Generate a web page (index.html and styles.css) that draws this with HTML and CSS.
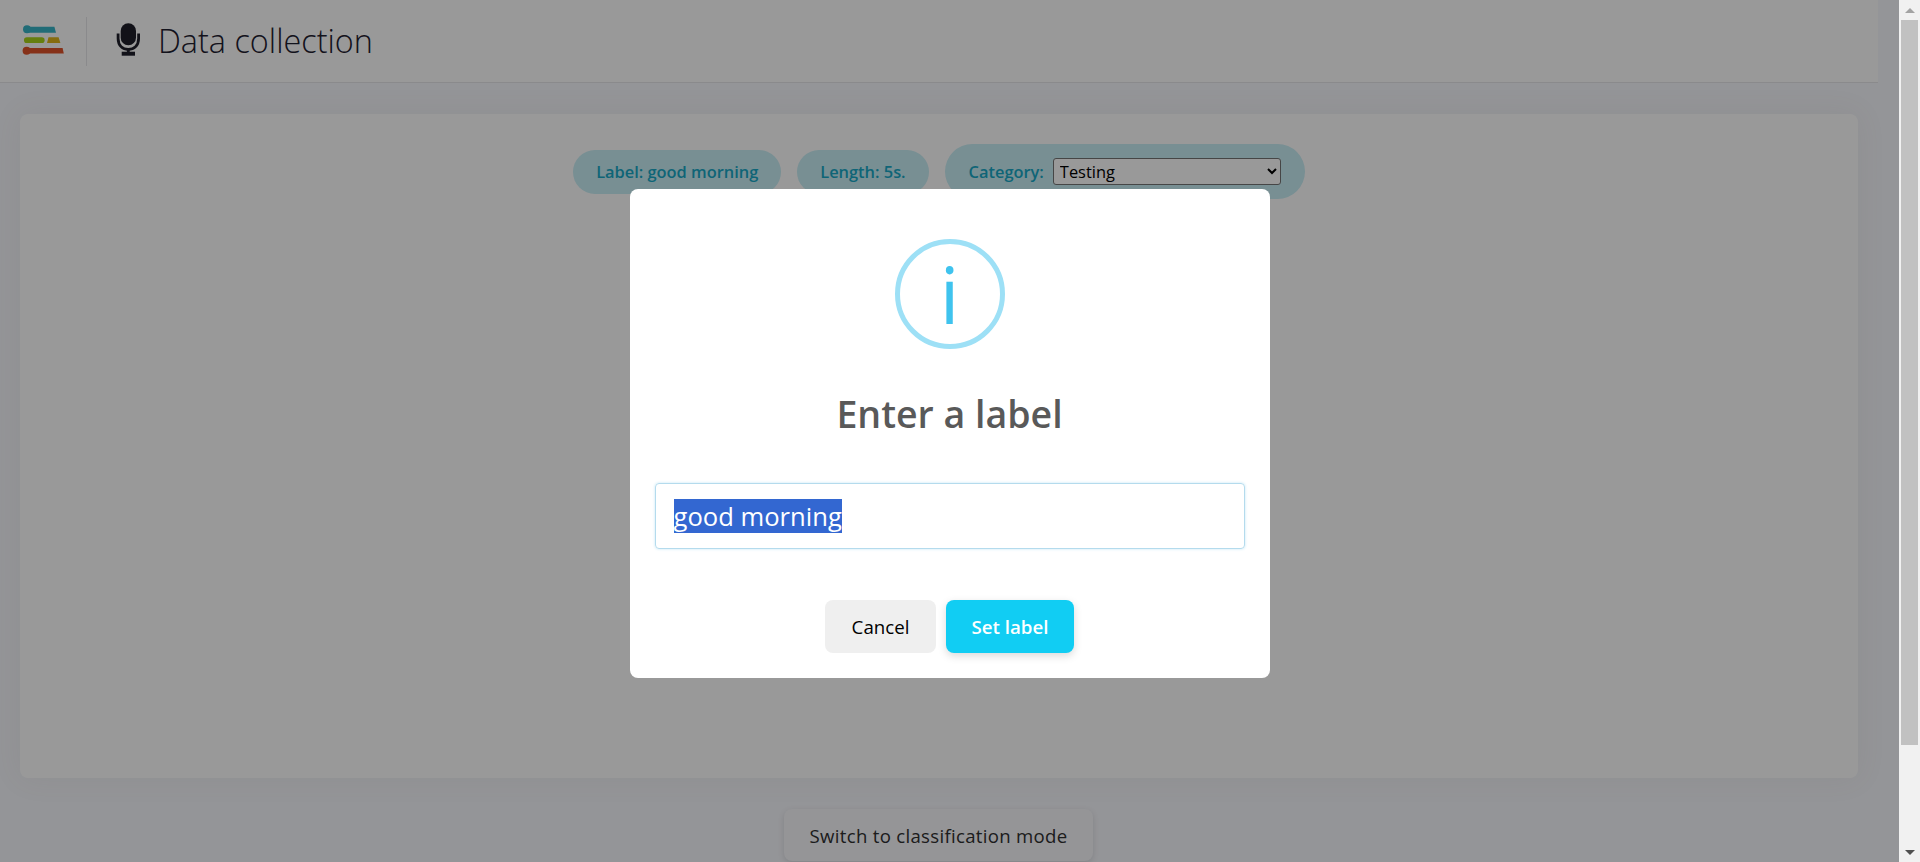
FILE: index.html
```html
<!DOCTYPE html>
<html lang="en">
<head>
<meta charset="utf-8">
<title>Data collection</title>
<link rel="stylesheet" href="styles.css">
</head>
<body>
<div class="viewport">
  <div class="page">
    <div class="page-inner">
      <header class="topbar">
        <svg class="logo" viewBox="0 0 44 32" width="44" height="32" aria-hidden="true">
          <circle class="l-teal" cx="5" cy="5.3" r="4"/>
          <path class="l-teal" d="M5 2.7H32.4L34 8.7H5Z"/>
          <rect class="l-green" x="2" y="13.3" width="20.6" height="5.7" rx="2.85"/>
          <path class="l-orange" d="M26.5 13.3H36.6L38.4 19H25Z"/>
          <circle class="l-red" cx="4.6" cy="26.7" r="4"/>
          <path class="l-red" d="M4.6 24H40.6L41.8 29.4H4.6Z"/>
        </svg>
        <div class="divider"></div>
        <svg class="mic" viewBox="0 0 24 34" width="24" height="34" aria-hidden="true">
          <rect class="mic-fill" x="4.7" y="0.3" width="15.3" height="22" rx="7.6"/>
          <path class="mic-line" d="M2.1 10.5V15.5C2.1 22.5 6.5 26.5 12.3 26.5S22.6 22.5 22.6 15.5V10.5"/>
          <path class="mic-line" d="M12.3 26.5V30"/>
          <path class="mic-base" d="M5.7 30.7H19"/>
        </svg>
        <h1 class="title">Data collection</h1>
      </header>
      <main class="card">
        <div class="pills">
          <div class="pill">Label: good morning</div>
          <div class="pill">Length: 5s.</div>
          <div class="pill pill-large">
            <span class="cat-label">Category:</span>
            <select class="cat-select"><option>Testing</option><option>Training</option></select>
          </div>
        </div>
      </main>
      <div class="switch-row"><button class="switch-btn">Switch to classification mode</button></div>
    </div>
    <div class="overlay">
      <div class="modal">
        <div class="info-icon"><span class="info-i">i</span></div>
        <h2 class="modal-title">Enter a label</h2>
        <div class="modal-input"><span class="selected">good morning</span></div>
        <div class="modal-actions">
          <button class="btn btn-cancel">Cancel</button>
          <button class="btn btn-confirm">Set label</button>
        </div>
      </div>
    </div>
  </div>
  <div class="scrollbar">
    <div class="arrow arrow-up"></div>
    <div class="track"><div class="thumb"></div></div>
    <div class="arrow arrow-down"></div>
  </div>
</div>
</body>
</html>
```
FILE: styles.css
```css
* { box-sizing: border-box; }
html, body { margin: 0; height: 100%; overflow: hidden; }
body { font-family: "Open Sans", sans-serif; background: #f7f8ff; }

.viewport { display: flex; height: 862px; width: 1920px; }
.page { position: relative; flex: 0 0 1899px; height: 862px; overflow: hidden; background: #f7f8fd; }
.page-inner { width: 1878px; }

.topbar {
  height: 83px; background: #fff; border-bottom: 1px solid #e6e6ea;
  display: flex; align-items: center; padding-left: 22px;
}
.logo { flex: none; margin-top: -2px; }
.l-teal { fill: #38b4c6; }
.l-green { fill: #a8d21a; }
.l-orange { fill: #e0b518; }
.l-red { fill: #e0532a; }
.divider { width: 1px; height: 49px; background: #e6e6ea; margin: 0 29px 0 20px; flex: none; }
.mic { flex: none; margin-right: 18px; margin-top: -2px; }
.mic-fill { fill: #1e1f2b; }
.mic-line { fill: none; stroke: #1e1f2b; stroke-width: 2.8; }
.mic-base { fill: none; stroke: #1e1f2b; stroke-width: 4; }
.title { margin: 0; font-size: 32.4px; font-weight: 300; color: #1e2030; line-height: 1; margin-top: -2px; }

.card {
  margin: 31px 20px; height: 664px; background: #fff; border-radius: 8px;
  box-shadow: 0 0 30px rgba(120, 110, 90, .08); padding-top: 30px;
}
.pills { display: flex; justify-content: center; align-items: center; gap: 16px; }
.pill {
  height: 44px; padding: 0 23px; border-radius: 22px; background: #c8eef5;
  display: flex; align-items: center; color: #18a8c6; font-size: 16.4px; font-weight: 600;
}
.pill-large { height: 55px; border-radius: 28px; padding: 0 24px; }
.cat-label { margin-right: 9px; }
.cat-select {
  width: 228px; height: 27px; font-family: "Open Sans", sans-serif; font-size: 16.4px;
  background: #fff; color: #000; border: 1px solid #767676; border-radius: 3px; padding: 0 0 0 2px;
}

.switch-row { display: flex; justify-content: center; padding-right: 1px; }
.switch-btn {
  width: 309px; height: 52px; border: 0; border-radius: 8px; background: #f8f8fc;
  font-family: "Open Sans", sans-serif; font-size: 18.6px; font-weight: 500; color: #303030;
  letter-spacing: .3px; box-shadow: 0 2px 6px rgba(0, 0, 0, .12);
}

.overlay {
  position: absolute; inset: 0; background: rgba(0, 0, 0, .4);
  display: flex; justify-content: center; align-items: flex-start; padding-top: 189px;
}
.modal {
  width: 640px; height: 489px; background: #fff; border-radius: 8px;
  display: flex; flex-direction: column; align-items: center; padding-top: 50px;
}
.info-icon {
  width: 110px; height: 110px; border: 5px solid #9de0f6; border-radius: 50%;
  display: flex; align-items: center; justify-content: center; flex: none;
}
.info-i { font-size: 78px; line-height: 1; color: #3fc3ee; }
.modal-title { margin: 40px 0 0; font-size: 37.5px; font-weight: 600; color: #595959; line-height: 50px; }
.modal-input {
  width: 590px; height: 66px; margin-top: 44px; border: 1px solid #b4dbed; border-radius: 4px;
  box-shadow: 0 0 3px #c4e6f5; display: flex; align-items: center; padding-left: 18px;
  font-size: 25.6px; color: #fff; flex: none;
}
.selected { background: #3367d1; line-height: 33px; padding-top: 1px; display: block; }
.modal-actions { display: flex; gap: 10px; margin-top: 51px; }
.btn {
  height: 53px; border: 0; border-radius: 8px; font-family: "Open Sans", sans-serif;
  font-size: 18.7px; font-weight: 600;
}
.btn-cancel { width: 111px; background: #efefef; color: #000; font-weight: 500; }
.btn-confirm { width: 128px; background: #11cdf3; color: #fff; box-shadow: 0 3px 8px rgba(0, 0, 0, .15); }

.scrollbar { flex: 0 0 21px; height: 862px; background: #f1f1f1; display: flex; flex-direction: column; align-items: center; }
.arrow { flex: none; height: 20px; display: flex; align-items: center; justify-content: center; }
.arrow::before { content: ""; width: 0; height: 0; border-left: 5px solid transparent; border-right: 5px solid transparent; }
.arrow-up::before { border-bottom: 5px solid #a3a3a3; }
.arrow-down::before { border-top: 5px solid #505050; }
.track { flex: 1; width: 100%; padding: 0 2px; }
.thumb { height: 725px; background: #c1c1c1; }
```
